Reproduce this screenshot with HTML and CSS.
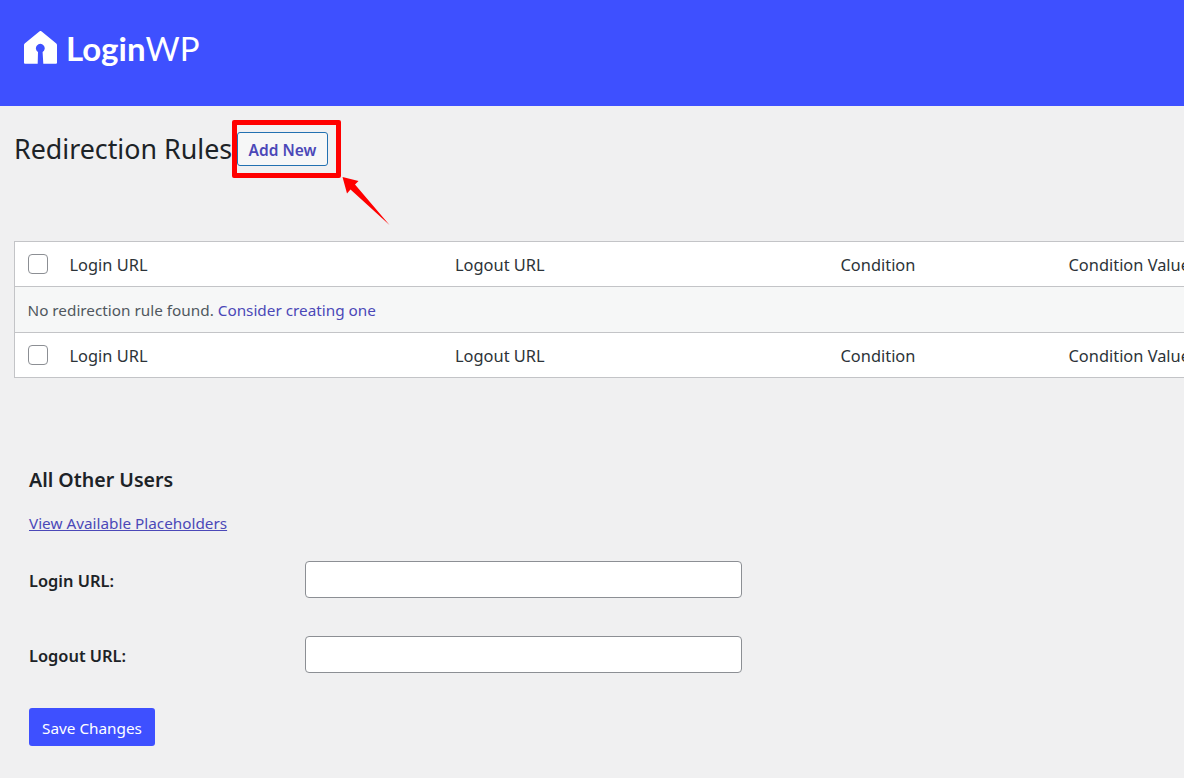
FILE: index.html
```html
<!DOCTYPE html>
<html lang="en">
<head>
<meta charset="utf-8">
<title>Redirection Rules</title>
<link rel="stylesheet" href="styles.css">
</head>
<body>
<header class="banner">
  <svg class="logo-icon" viewBox="0 0 35 34" width="35" height="34" aria-hidden="true">
    <path fill="#fff" d="M16.300.5a1.800 1.800 0 0 1 2.400 0L33.300 12.600a2 2 0 0 1 .7 1.500V31.800a1 1 0 0 1-1 1H20.300L19.600 21A4.400 4.400 0 1 0 15 21L14.700 32.800H2a1 1 0 0 1-1-1V14.100a2 2 0 0 1 .7-1.500Z"/>
  </svg>
  <div class="logo-text"><b>Login</b><span>WP</span></div>
</header>
<main class="page">
  <div class="title-row">
    <h1>Redirection Rules</h1>
    <a class="add-new" href="#">Add New</a>
    <span class="callout"></span>
    <svg class="arrow" viewBox="0 0 60 60" width="60" height="60" aria-hidden="true">
      <path fill="#f00" d="M1.500 3 17.500 7 14 10.500 48.500 51 9.500 15.500 6 19.500Z"/>
    </svg>
  </div>
  <div class="table">
    <div class="row head">
      <span class="check"></span><span>Login URL</span><span>Logout URL</span><span>Condition</span><span>Condition Value</span>
    </div>
    <div class="row empty">No redirection rule found. <a href="#">Consider creating one</a></div>
    <div class="row head">
      <span class="check"></span><span>Login URL</span><span>Logout URL</span><span>Condition</span><span>Condition Value</span>
    </div>
  </div>
  <section class="others">
    <h2>All Other Users</h2>
    <a class="placeholders" href="#">View Available Placeholders</a>
    <div class="field login-field"><label for="login">Login URL:</label><input id="login" type="text"></div>
    <div class="field"><label for="logout">Logout URL:</label><input id="logout" type="text"></div>
    <button class="save" type="button">Save Changes</button>
  </section>
</main>
</body>
</html>
```
FILE: styles.css
```css
* { box-sizing: border-box; }
html, body { margin: 0; height: 100%; overflow: hidden; }
body {
  background: #f0f0f1;
  color: #1d2327;
  font-family: "Noto Sans", "Open Sans", sans-serif;
  font-size: 15px;
}
a { color: #4b48b8; text-decoration: none; }

.banner {
  height: 106px;
  background: #3e50ff;
  display: flex;
  align-items: flex-start;
  padding: 31px 0 0 23px;
  gap: 8px;
}
.logo-icon { display: block; }
.logo-text {
  color: #fff;
  font-family: Lato, sans-serif;
  font-size: 33px;
  line-height: 34px;
}
.logo-text b { font-weight: 700; }
.logo-text span { font-weight: 400; }

.page { padding: 0 0 0 14px; }
.title-row {
  position: relative;
  display: flex;
  align-items: center;
  height: 88px;
  padding-bottom: 1px;
}
h1 {
  margin: 0 0 2px;
  width: 218px;
  font-size: 26.800px;
  font-weight: 400;
  line-height: 36px;
  white-space: nowrap;
}
.add-new {
  margin: 0 0 2px 5px;
  padding-top: 2px;
  width: 91px;
  height: 34px;
  display: flex;
  align-items: center;
  justify-content: center;
  border: 1px solid #2271b1;
  border-radius: 3px;
  background: #f6f7f7;
  font-weight: 600;
  font-size: 15.500px;
}
.callout {
  position: absolute;
  left: 218px;
  top: 14px;
  width: 109px;
  height: 58px;
  border: 5px solid #f00;
  border-radius: 2px;
}
.arrow {
  position: absolute;
  left: 327px;
  top: 68px;
}

.table {
  margin-top: 47px;
  width: 1400px;
  border: 1px solid #c3c4c7;
  background: #fff;
}
.row {
  display: grid;
  grid-template-columns: 54.500px 385.500px 385.500px 228px 1fr;
  align-items: center;
  height: 44px;
  font-size: 16.400px;
}
.head { color: #2c3338; }
.check {
  width: 20px;
  height: 20px;
  margin-left: 13px;
  border: 1px solid #8c8f94;
  border-radius: 4px;
  background: #fff;
}
.empty {
  display: block;
  height: 47px;
  padding: 0 12.500px;
  line-height: 47px;
  font-size: 15.300px;
  color: #50575e;
  background: #f6f7f7;
  border-top: 1px solid #c3c4c7;
  border-bottom: 1px solid #c3c4c7;
}

.others { padding: 0 0 0 15px; }
h2 {
  margin: 88px 0 0;
  font-size: 19.600px;
  font-weight: 600;
  line-height: 28px;
}
.placeholders {
  display: inline-block;
  margin-top: 19px;
  font-size: 15.300px;
  line-height: 20px;
  text-decoration: underline;
}
.field {
  display: flex;
  align-items: center;
  height: 37px;
  margin-top: 38px;
}
.login-field { margin-top: 28px; }
label {
  width: 276px;
  padding-top: 2px;
  font-weight: 600;
  font-size: 16.400px;
}
input {
  width: 437px;
  height: 37px;
  border: 1px solid #8c8f94;
  border-radius: 4px;
  background: #fff;
}
.save {
  display: block;
  margin-top: 35px;
  padding: 2px 0 0;
  width: 126px;
  height: 38px;
  border: 0;
  border-radius: 3px;
  background: #3e50ff;
  color: #fff;
  font-family: inherit;
  font-size: 15.300px;
}
```
